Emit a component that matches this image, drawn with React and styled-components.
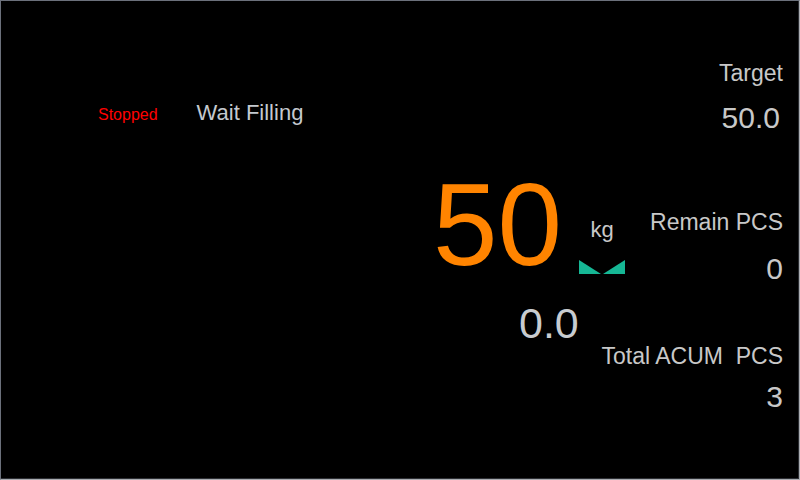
import React from 'react';
import styled, { createGlobalStyle } from 'styled-components';

const GlobalStyle = createGlobalStyle`
  html, body {
    margin: 0;
    padding: 0;
    background: #000;
  }
  body {
    font-family: "Liberation Sans", Arial, sans-serif;
  }
`;

const Frame = styled.div`
  box-sizing: border-box;
  width: 800px;
  height: 480px;
  background: #000;
  border: 1px solid;
  border-color: #6b707b #a9acb1 #a9acb1 #6b707b;
  box-shadow: inset -1px -1px 0 #2c2e33;
  display: grid;
  grid-template-columns: 430px minmax(0, 1fr) auto;
  overflow: hidden;
`;

const StatusRow = styled.div`
  display: flex;
  align-items: baseline;
  gap: 39px;
  padding: 101px 0 0 97px;
  align-self: start;
`;

const StateText = styled.span`
  font-size: 16px;
  line-height: 1;
  color: #ff0000;
`;

const StepText = styled.span`
  font-size: 22px;
  line-height: 1;
  color: #c4c9cf;
`;

const Center = styled.div`
  display: flex;
  flex-direction: column;
  padding-top: 166px;
`;

const ReadingRow = styled.div`
  display: flex;
  align-items: flex-start;
`;

const BigValue = styled.div`
  font-size: 116px;
  line-height: 1;
  color: #ff8400;
  padding-left: 2px;
`;

const Unit = styled.div`
  display: flex;
  flex-direction: column;
  align-items: center;
  flex: none;
  width: 46px;
  margin: 52px 0 0 17px;
`;

const UnitText = styled.span`
  font-size: 22px;
  line-height: 1;
  color: #c8c8c8;
  margin-bottom: 19px;
`;

const SubValue = styled.div`
  font-size: 43px;
  line-height: 1;
  color: #c8ccd0;
  margin: 19px 0 0 88px;
`;

const Stats = styled.div`
  display: flex;
  flex-direction: column;
  align-items: flex-end;
  padding: 61px 16px 0 0;
`;

const Stat = styled.div`
  display: flex;
  flex-direction: column;
  align-items: flex-end;
  gap: ${(p) => p.$gap}px;
  margin-top: ${(p) => p.$top}px;
`;

const StatLabel = styled.span`
  font-size: 23px;
  line-height: 1;
  color: #c8c8c8;
  white-space: pre;
`;

const StatValue = styled.span`
  font-size: 30px;
  line-height: 1;
  color: #c8c8c8;
  padding-right: ${(p) => p.$pr || 0}px;
`;

function StableMarks() {
  return (
    <svg width="46" height="14" viewBox="0 0 46 14">
      <polygon points="0,0 0,14 22,14" fill="#16b795" />
      <polygon points="46,0 46,14 24,14" fill="#16b795" />
    </svg>
  );
}

const stats = [
  { label: 'Target', value: '50.0', top: 0, gap: 18, pr: 3 },
  { label: 'Remain PCS', value: '0', top: 78, gap: 20 },
  { label: 'Total ACUM  PCS', value: '3', top: 61, gap: 14 },
];

export default function App() {
  return (
    <>
      <GlobalStyle />
      <Frame>
        <StatusRow>
          <StateText>Stopped</StateText>
          <StepText>Wait Filling</StepText>
        </StatusRow>

        <Center>
          <ReadingRow>
            <BigValue>50</BigValue>
            <Unit>
              <UnitText>kg</UnitText>
              <StableMarks />
            </Unit>
          </ReadingRow>
          <SubValue>0.0</SubValue>
        </Center>

        <Stats>
          {stats.map((s) => (
            <Stat key={s.label} $top={s.top} $gap={s.gap}>
              <StatLabel>{s.label}</StatLabel>
              <StatValue $pr={s.pr}>{s.value}</StatValue>
            </Stat>
          ))}
        </Stats>
      </Frame>
    </>
  );
}
